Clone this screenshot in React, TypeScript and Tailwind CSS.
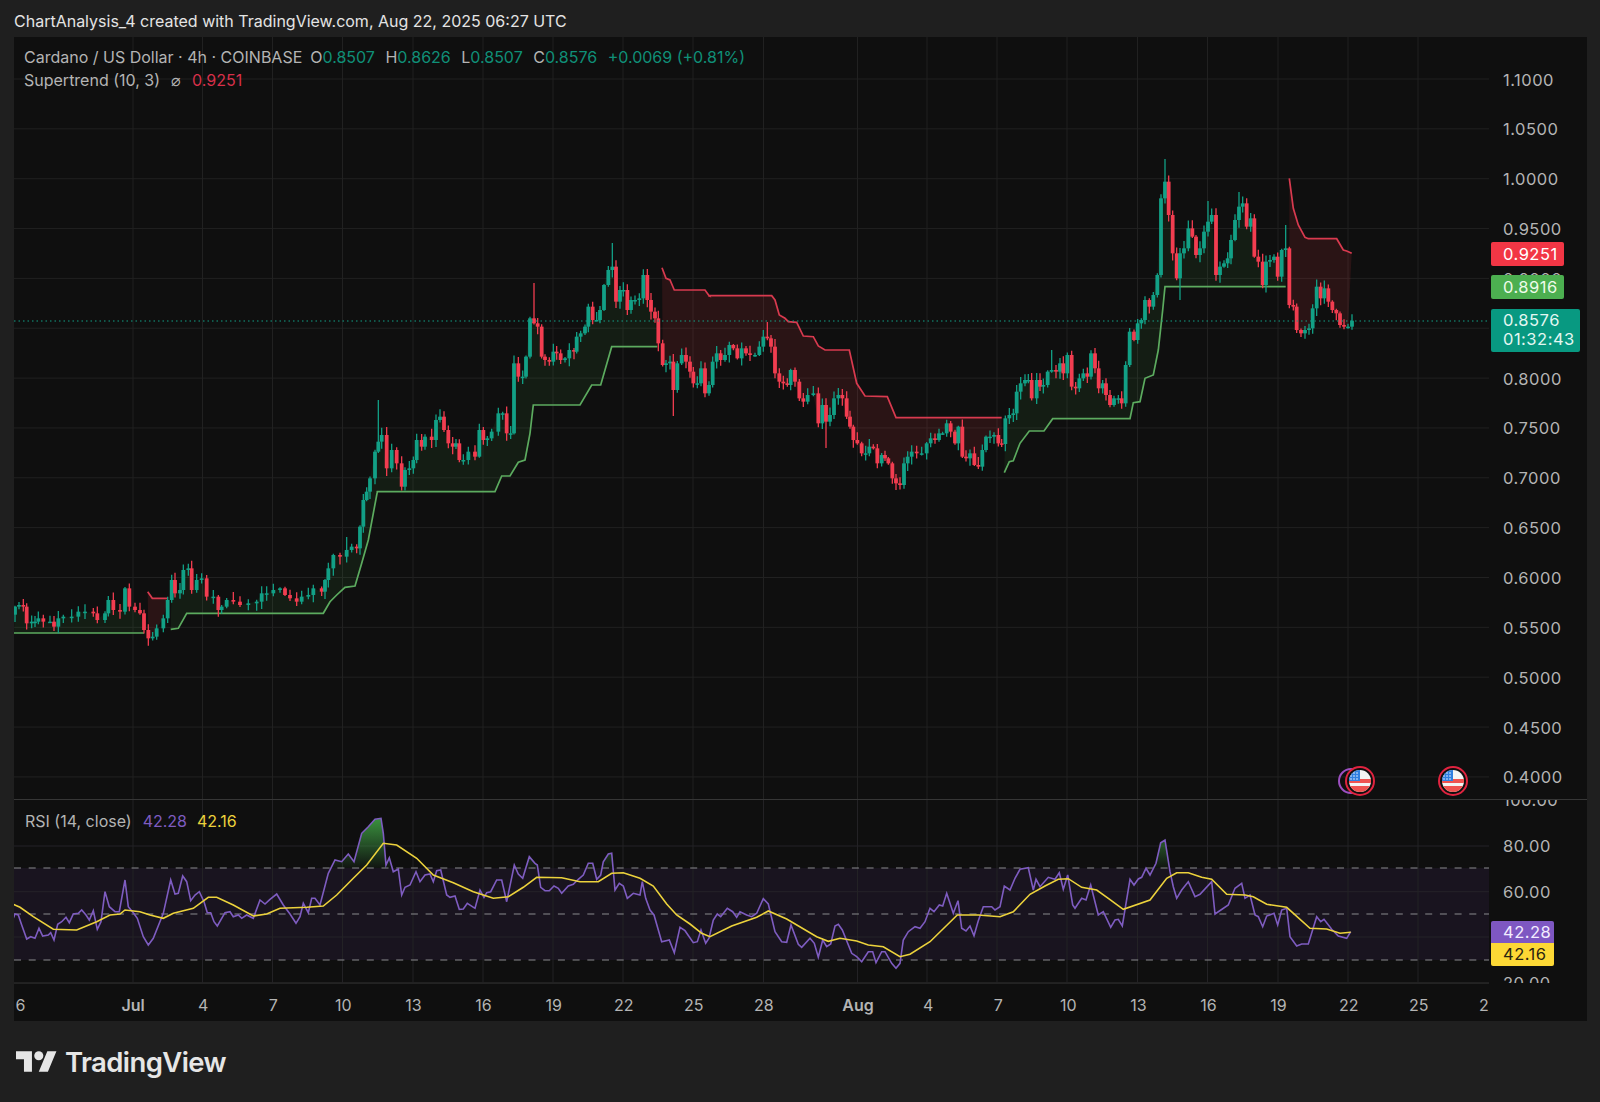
import React from "react";

type Pt = number[];
// traced from the chart, in zoomed coordinates, mapped back to page pixels
const z = (x0: number, y0: number, pts: Pt[]) => pts.map(([x, y]) => [x0 + x / 3, y0 + y / 3]);
const poly = (pts: Pt[]) => pts.map(([x, y]) => `${x.toFixed(1)},${y.toFixed(1)}`).join(" ");

const closes = [
  ...z(0, 380, [[45,680],[57,675],[70,680],[80,730],[95,725],[105,725],[115,715],[130,725],[150,725],[162,740],[175,715],[190,710],[215,710],[235,695],[255,695],[280,700],[292,720],[315,700],[325,660],[340,690],[360,695],[375,625],[388,680],[405,690],[420,700],[432,750],[445,775],[458,770],[470,745],[490,715],[503,660],[515,600],[525,640],[540,630],[550,570],[565,565],[575,630],[590,600],[605,595],[620,650],[640,650],[655,690],[665,680],[680,660],[700,665],[720,675],[745,670],[770,665],[785,640],[800,640],[820,630],[840,625],[855,645],[870,655],[890,665],[905,650],[925,645],[940,625],[965,635],[975,600],[985,565],[1000,525],[1020,530],[1040,510],[1055,500],[1070,505],[1080,440],[1090,360],[1100,335],[1110,295],[1125,215],[1135,185],[1145,165],[1160,265],[1175,210],[1190,250]]),
  ...z(370, 230, [[95,770],[105,720],[118,715],[130,690],[140,630],[155,650],[165,620],[185,630],[198,570],[210,560],[222,600],[235,640],[248,650],[258,640],[268,690],[280,690],[295,665],[315,680],[328,600],[340,630],[352,625],[365,605],[385,550],[398,550],[410,610],[422,610],[432,400],[445,440],[458,440],[468,380],[480,265],[492,280],[503,290],[515,380],[525,390],[538,395],[550,365],[560,370],[572,390],[585,385],[598,360],[612,365],[620,320],[632,310],[645,290],[655,230],[668,270],[680,270],[690,240],[702,165],[715,120],[727,110],[738,215],[750,180],[760,180],[772,240],[783,210],[795,210],[808,205],[820,135],[832,210],[843,245],[855,265],[865,340],[878,405]]),
  ...z(640, 250, [[78,340],[90,335],[100,420],[112,340],[125,315],[138,335],[150,365],[160,400],[172,400],[183,355],[195,430],[207,405],[218,335],[230,310],[242,330],[255,315],[268,285],[280,295],[292,325],[305,295],[318,310],[330,315],[345,315],[358,290],[370,260],[382,265],[393,290],[405,370],[418,395],[430,400],[442,405],[452,360],[465,395],[478,445],[490,455],[503,435],[520,430],[535,520],[547,465],[558,515],[570,495],[582,445],[595,435],[607,445],[620,500],[630,530],[640,570],[652,580],[665,610],[677,610],[688,590],[700,595],[712,640],[725,615],[735,625],[745,640],[757,685],[768,700],[780,705],[792,640],[803,620],[815,605],[830,610],[845,610],[860,580],[872,565],[885,570],[897,550],[908,550],[920,520],[932,545],[945,580],[955,530],[967,620],[978,625],[990,610],[1003,645],[1015,650],[1027,600],[1038,560],[1050,560],[1062,555],[1075,580]]),
  ...z(980, 150, [[65,882],[76,805],[88,795],[100,790],[110,725],[122,700],[135,690],[145,690],[155,745],[170,690],[180,710],[190,705],[203,665],[215,660],[228,665],[240,640],[250,670],[262,615],[275,710],[287,715],[298,685],[310,670],[322,680],[333,610],[345,655],[356,715],[368,700],[378,735],[390,765],[402,745],[415,745],[425,760],[437,645],[449,545],[462,570],[473,520],[484,510],[495,450],[508,470],[520,435],[532,375],[543,145],[555,95],[566,195],[578,310],[590,385],[600,310],[612,295],[625,235],[637,260],[648,315],[660,295],[672,245],[684,215],[695,195],[708,375],[720,350],[732,340],[743,325],[753,270],[765,210],[777,170],[788,160],[800,230],[812,205],[823,320],[835,335],[848,405],[858,335],[870,330],[882,320],[893,380],[905,300],[917,295],[928,465],[940,470],[950,540],[963,550],[975,540],[987,535],[998,475],[1010,410],[1022,445],[1033,415],[1045,455],[1057,480],[1069,490],[1080,525],[1092,530],[1104,530],[1116,512]]),
];

// the long wicks that stand out: x, y of the tip
const longWicks: Pt[] = [[377,400],[347,537],[533,283],[612,243],[673,416],[826,448],[768,322],[1165,159],[1238,192],[1208,201],[1286,225],[1180,300],[1042,380],[1052,350]];

let seed = 7;
const rnd = () => {
  seed = (seed * 16807) % 2147483647;
  return seed / 2147483647;
};

const candles = closes.map(([x, c], i) => {
  const o = i ? closes[i - 1][1] : c + 8;
  const top = Math.min(o, c) - 1 - rnd() * 7;
  const bottom = Math.max(o, c) + 1 + rnd() * 7;
  let h = top;
  let l = bottom;
  longWicks.forEach(([wx, wy]) => {
    if (Math.abs(wx - x) < 2) {
      if (wy < h) h = wy;
      if (wy > l) l = wy;
    }
  });
  return { x, o, c, h, l, up: c <= o };
});

const area = (line: Pt[]) => {
  const from = line[0][0];
  const to = line[line.length - 1][0];
  const part = closes.filter(([x]) => x >= from && x <= to).reverse();
  return poly([...line, ...part]);
};

const greenLines = [
  [[14,633],[144,633]],
  [...z(0, 380, [[512,748],[535,745],[560,700],[970,700],[990,665],[1010,645],[1035,622],[1065,618],[1085,550],[1105,480],[1120,400],[1132,336]]), ...z(370, 230, [[20,785],[375,785],[395,738],[420,738],[445,697],[465,690],[480,610],[490,525],[630,525],[665,465],[692,465],[725,350],[862,350]])],
  z(980, 150, [[73,968],[88,935],[100,932],[120,880],[148,843],[192,843],[218,806],[450,806],[460,758],[480,755],[495,685],[520,675],[535,600],[548,480],[555,410],[917,410]]),
];

const redLines = [
  z(0, 380, [[443,635],[457,655],[503,655]]),
  [...z(370, 230, [[876,113],[888,145],[900,150],[913,180],[1005,180],[1018,198]]), ...z(640, 250, [[205,137],[395,137],[405,150],[418,195],[435,205],[445,215],[470,217],[490,258],[520,260],[535,288],[555,300],[628,300],[650,400],[675,438],[742,440],[768,503]]), ...z(980, 150, [[65,803]])],
  z(980, 150, [[928,85],[940,175],[955,225],[975,262],[985,266],[1070,266],[1090,300],[1100,303],[1115,310]]),
];

const rsi = [
  ...z(0, 790, [[40,385],[45,372],[55,375],[65,405],[80,447],[92,440],[105,445],[117,415],[128,438],[145,435],[152,428],[162,450],[173,403],[185,395],[198,382],[208,398],[220,372],[235,370],[245,360],[258,375],[268,390],[280,362],[292,418],[303,395],[315,305],[328,350],[345,365],[358,365],[375,270],[385,350],[400,368],[412,385],[430,440],[445,465],[460,445],[490,370],[512,270],[525,312],[535,310],[548,258],[560,275],[572,332],[585,315],[598,305],[612,335],[622,368],[632,368],[642,395],[652,408],[675,368],[690,365],[700,380],[715,375],[725,385],[740,375],[760,385],[780,330],[795,342],[810,328],[830,312],[850,345],[870,372],[888,400],[900,380],[910,340],[925,368],[935,325],[945,325],[960,345],[985,250],[1005,210],[1025,215],[1045,192],[1062,215],[1085,130],[1105,110],[1125,88],[1143,85],[1150,130],[1158,225],[1168,203],[1180,245],[1195,237],[1205,315],[1215,292],[1230,285],[1248,245],[1260,275],[1275,255],[1290,252],[1300,275],[1310,242],[1322,240],[1340,315],[1350,322],[1365,318],[1378,358],[1390,357],[1402,340],[1425,355],[1440,300],[1452,322],[1460,308],[1472,305],[1490,270]]),
  ...z(480, 800, [[65,240],[80,305],[103,195],[115,222],[128,235],[148,170],[165,190],[172,195],[182,262],[195,272],[208,272],[222,258],[235,265],[245,280],[265,258],[280,253],[295,238],[310,225],[325,190],[338,190],[350,238],[362,225],[370,185],[385,162],[395,160],[405,270],[418,250],[430,258],[442,295],[460,280],[480,285],[487,245],[497,295],[510,330],[522,345],[545,425],[568,420],[583,458],[600,382],[615,392],[640,428],[652,425],[663,390],[677,430],[687,415],[700,360],[712,342],[722,350],[742,325],[758,335],[770,352],[780,335],[800,345],[815,350],[830,340],[850,296],[865,312],[885,395],[905,425],[920,427],[933,375],[955,433],[965,442],[990,415],[1003,430],[1015,472],[1028,420],[1040,440],[1052,432],[1065,378],[1075,373],[1087,390],[1115,460],[1130,470],[1145,485],[1165,455],[1178,455],[1188,488],[1205,455],[1215,455],[1235,490],[1248,505],[1260,490],[1270,420],[1285,395],[1305,380],[1320,385],[1335,365],[1350,325],[1362,335],[1378,315],[1388,318],[1400,280],[1420,340],[1434,302],[1445,385],[1458,393],[1470,378],[1482,407],[1495,362]]),
  ...z(900, 800, [[250,320],[275,320],[285,330],[300,320],[313,258],[330,270],[345,235],[360,208],[385,203],[400,270],[408,238],[420,260],[445,232],[465,238],[478,218],[490,268],[503,225],[518,315],[525,325],[545,295],[558,300],[572,255],[595,345],[610,335],[632,382],[645,360],[655,358],[667,378],[690,238],[702,255],[715,237],[725,232],[738,205],[750,225],[768,190],[782,128],[795,120],[810,215],[820,260],[830,295],[845,270],[865,245],[885,290],[900,283],[935,245],[945,342],[985,315],[1005,265],[1025,250],[1035,295],[1050,285],[1065,345],[1075,350],[1088,380],[1100,348],[1122,340],[1133,375],[1145,330],[1160,325],[1170,410],[1190,438],[1205,432],[1225,432],[1250,350],[1262,365],[1272,358],[1295,388],[1315,408],[1340,415],[1352,395]]),
];

const rsiMa = [
  ...z(0, 790, [[40,343],[60,352],[100,380],[160,418],[230,420],[290,395],[330,375],[360,372],[375,360],[420,365],[450,375],[490,385],[520,370],[580,355],[625,322],[650,322],[700,345],[760,378],[800,372],[840,355],[920,352],[970,348],[1010,315],[1060,265],[1100,225],[1150,160],[1190,165],[1250,205],[1300,255],[1360,278],[1420,305],[1480,325]]),
  ...z(480, 800, [[85,290],[130,262],[170,232],[245,233],[300,245],[355,245],[395,220],[430,218],[480,235],[520,258],[560,312],[590,345],[630,372],[665,400],[690,410],[755,378],[830,352],[865,333],[920,357],[1010,410],[1045,424],[1080,415],[1130,423],[1165,435],[1210,440],[1260,470],[1290,463],[1350,425],[1432,345],[1495,345]]),
  ...z(900, 800, [[300,350],[340,335],[390,283],[435,258],[475,238],[505,236],[545,262],[590,270],[625,295],[670,328],[750,300],[800,235],[830,218],[865,218],[905,232],[935,238],[980,283],[1035,285],[1060,290],[1100,313],[1160,322],[1230,385],[1280,387],[1320,400],[1352,397]]),
];

const gridX = [133,202.5,272.5,342.5,413,483,553,623,693,763.5,857.5,927,997,1067,1137.5,1207.5,1278,1348,1418];
const prices = ["1.1000","1.0500","1.0000","0.9500","0.9000","0.8500","0.8000","0.7500","0.7000","0.6500","0.6000","0.5500","0.5000","0.4500","0.4000"];
const gridY = prices.map((_, i) => 79 + i * 49.85);
const days = ["4","7","10","13","16","19","22","25","28"];

const FlagEvent = ({ x, id }: { x: number; id: string }) => (
  <g>
    <clipPath id={id}>
      <circle cx={x} cy={781} r={11} />
    </clipPath>
    <circle cx={x} cy={781} r={14} fill="#0f0f0f" stroke="#e0233f" strokeWidth={2} />
    <g clipPath={`url(#${id})`}>
      <rect x={x - 11} y={770} width={22} height={22} fill="#f4f4f4" />
      <rect x={x - 11} y={779} width={22} height={4} fill="#ef5350" />
      <rect x={x - 11} y={786} width={22} height={6} fill="#ef5350" />
      <rect x={x - 11} y={770} width={11} height={11} fill="#2f7fe0" />
      {[0, 1, 2].map((r) =>
        [0, 1, 2].map((c) => <circle key={`${r}${c}`} cx={x - 9 + c * 3} cy={773 + r * 3} r={0.8} fill="#e8f2ff" />)
      )}
    </g>
  </g>
);

const PriceChart = () => (
  <svg viewBox="14 37 1475 762" className="block w-[1475px] h-[762px]">
    {gridY.map((y) => (
      <line key={y} x1={14} x2={1489} y1={y} y2={y} stroke="#212121" />
    ))}
    {gridX.map((x) => (
      <line key={x} x1={x} x2={x} y1={37} y2={799} stroke="#212121" />
    ))}
    {greenLines.map((l, i) => (
      <polygon key={i} points={area(l)} fill="#4caf50" fillOpacity={0.09} />
    ))}
    {redLines.map((l, i) => (
      <polygon key={i} points={area(l)} fill="#f23645" fillOpacity={0.12} />
    ))}
    {greenLines.map((l, i) => (
      <polyline key={i} points={poly(l)} fill="none" stroke="#5cab5f" strokeWidth={1.7} />
    ))}
    {redLines.map((l, i) => (
      <polyline key={i} points={poly(l)} fill="none" stroke="#d83a4f" strokeWidth={1.7} />
    ))}
    {candles.map((k, i) => {
      const color = k.up ? "#12a086" : "#f23d50";
      return (
        <g key={i}>
          <line x1={k.x} x2={k.x} y1={k.h} y2={k.l} stroke={color} strokeWidth={1.3} />
          <rect x={k.x - 1.9} y={Math.min(k.o, k.c)} width={3.8} height={Math.max(Math.abs(k.o - k.c), 1.5)} fill={color} />
        </g>
      );
    })}
    <line x1={14} x2={1489} y1={321} y2={321} stroke="#12a086" strokeDasharray="1.5 3" strokeWidth={1.2} />
    <circle cx={1351} cy={781} r={12} fill="none" stroke="#9c4fc0" strokeWidth={2} />
    <FlagEvent x={1360} id="flag-a" />
    <FlagEvent x={1453} id="flag-b" />
  </svg>
);

const RsiChart = () => (
  <svg viewBox="14 800 1475 183" className="block w-[1475px] h-[183px]">
    <defs>
      <linearGradient id="ob" gradientUnits="userSpaceOnUse" x1="0" y1="815" x2="0" y2="868">
        <stop offset="0" stopColor="#3fa144" stopOpacity={0.95} />
        <stop offset="1" stopColor="#3fa144" stopOpacity={0.04} />
      </linearGradient>
      <clipPath id="above">
        <rect x={14} y={800} width={1475} height={68} />
      </clipPath>
    </defs>
    <rect x={14} y={868} width={1475} height={92} fill="#19141f" />
    {[846, 891.7, 937].map((y) => (
      <line key={y} x1={14} x2={1489} y1={y} y2={y} stroke="#252329" />
    ))}
    <line x1={14} x2={1489} y1={982.5} y2={982.5} stroke="#212121" />
    {gridX.map((x) => (
      <line key={x} x1={x} x2={x} y1={800} y2={983} stroke="#232225" />
    ))}
    {[868, 914, 960].map((y) => (
      <line key={y} x1={14} x2={1489} y1={y} y2={y} stroke="#8a8a8e" strokeDasharray="7 7.7" strokeWidth={1.2} />
    ))}
    <polygon clipPath="url(#above)" points={poly([[14, 868], ...rsi, [1352, 868]])} fill="url(#ob)" />
    <polyline points={poly(rsi)} fill="none" stroke="#7e5cc0" strokeWidth={1.6} />
    <polyline points={poly(rsiMa)} fill="none" stroke="#ecd23c" strokeWidth={1.6} />
  </svg>
);

export default function App() {
  return (
    <div className="w-[1600px] h-[1102px] flex flex-col bg-[#1f1f1f] overflow-hidden [font-family:Inter,sans-serif]">
      <div className="h-[37px] shrink-0 pl-[14px] pt-[11px] text-[16px] leading-[21px] text-[#e4e4e4]">
        ChartAnalysis_4 created with TradingView.com, Aug 22, 2025 06:27 UTC
      </div>

      <div className="ml-[14px] w-[1573px] h-[984px] shrink-0 flex flex-col bg-[#0f0f0f] text-[#b4b4b4]">
        <div className="relative flex h-[762px]">
          <PriceChart />
          <div className="absolute left-[10px] top-[9px] text-[16px] leading-[23px]">
            <div className="flex">
              <span>Cardano / US Dollar · 4h · COINBASE</span>
              <span className="ml-[8px]">O<span className="text-[#0f8f78]">0.8507</span></span>
              <span className="ml-[10.5px]">H<span className="text-[#0f8f78]">0.8626</span></span>
              <span className="ml-[10.5px]">L<span className="text-[#0f8f78]">0.8507</span></span>
              <span className="ml-[10.5px]">C<span className="text-[#0f8f78]">0.8576</span></span>
              <span className="ml-[10.5px] text-[#0f8f78]">+0.0069 (+0.81%)</span>
            </div>
            <div className="flex">
              <span>Supertrend (10, 3)</span>
              <span className="ml-[11px]">⌀</span>
              <span className="ml-[11px] text-[#d8304a]">0.9251</span>
            </div>
          </div>
          <div className="relative w-[98px] overflow-hidden pt-[18px] text-[16.5px]">
            {prices.map((p) => (
              <div key={p} className="h-[49.85px] pl-[14px] flex items-center tracking-[0.5px]">
                {p}
              </div>
            ))}
            <div className="absolute left-[2px] top-[205px] w-[73px] h-[24px] rounded-[2px] bg-[#f23645] text-white tracking-[0.5px] pl-[12px] flex items-center">0.9251</div>
            <div className="absolute left-[2px] top-[238px] w-[73px] h-[24px] rounded-[2px] bg-[#4caf50] text-[#eefbea] tracking-[0.5px] pl-[12px] flex items-center">0.8916</div>
            <div className="absolute left-[2px] top-[272px] w-[89px] h-[43px] rounded-[2px] bg-[#089981] text-[#e3f7f2] tracking-[0.5px] pl-[12px] pt-[2px] leading-[19px]">
              <div>0.8576</div>
              <div>01:32:43</div>
            </div>
          </div>
        </div>

        <div className="h-px bg-[#363636] shrink-0" />

        <div className="relative flex h-[183px]">
          <RsiChart />
          <div className="absolute left-[11px] top-[10px] flex text-[16px] leading-[22px]">
            <span>RSI (14, close)</span>
            <span className="ml-[11px] text-[#7e5cc0]">42.28</span>
            <span className="ml-[10px] text-[#ecd23c]">42.16</span>
          </div>
          <div className="relative w-[98px] overflow-hidden text-[16.5px]">
            <div className="-mt-[22px]">
              {["100.00", "80.00", "60.00", "40.00", "20.00"].map((p) => (
                <div key={p} className="h-[45.7px] pl-[14px] flex items-center tracking-[0.5px]">
                  {p}
                </div>
              ))}
            </div>
            <div className="absolute left-[2px] top-[121px] w-[63px] h-[22px] rounded-t-[2px] bg-[#7e57c2] text-[#f2ecff] tracking-[0.5px] pl-[12px] flex items-center">42.28</div>
            <div className="absolute left-[2px] top-[143px] w-[63px] h-[23px] rounded-b-[2px] bg-[#fdd835] text-[#2a2410] tracking-[0.5px] pl-[12px] flex items-center">42.16</div>
          </div>
        </div>

        <div className="h-[38px] shrink-0 w-[1475px] overflow-hidden flex items-center text-[16px] pt-[4px] border-t border-[#232323]">
          <div className="w-[13px] shrink-0 text-center">6</div>
          <div className="ml-[71px] w-[70.1px] shrink-0 text-center font-semibold">Jul</div>
          {days.map((d) => (
            <div key={d} className="w-[70.1px] shrink-0 text-center">{d}</div>
          ))}
          <div className="ml-[24px] w-[70.1px] shrink-0 text-center font-semibold">Aug</div>
          {days.map((d) => (
            <div key={`b${d}`} className="w-[70.1px] shrink-0 text-center">{d}</div>
          ))}
        </div>
      </div>

      <div className="flex-1 flex items-start pl-[16px] pt-[30px] text-[#e6e6e6]">
        <svg viewBox="0 4 36 18" className="w-[41px] h-[21px]" fill="currentColor">
          <path d="M14 22H7V11H0V4h14v18zM28 22h-8l7.5-18h8L28 22z" />
          <circle cx="20" cy="8" r="4" />
        </svg>
        <span className="ml-[8px] -mt-[6px] text-[27.5px] leading-[34px] font-semibold tracking-[-0.6px]">TradingView</span>
      </div>
    </div>
  );
}
